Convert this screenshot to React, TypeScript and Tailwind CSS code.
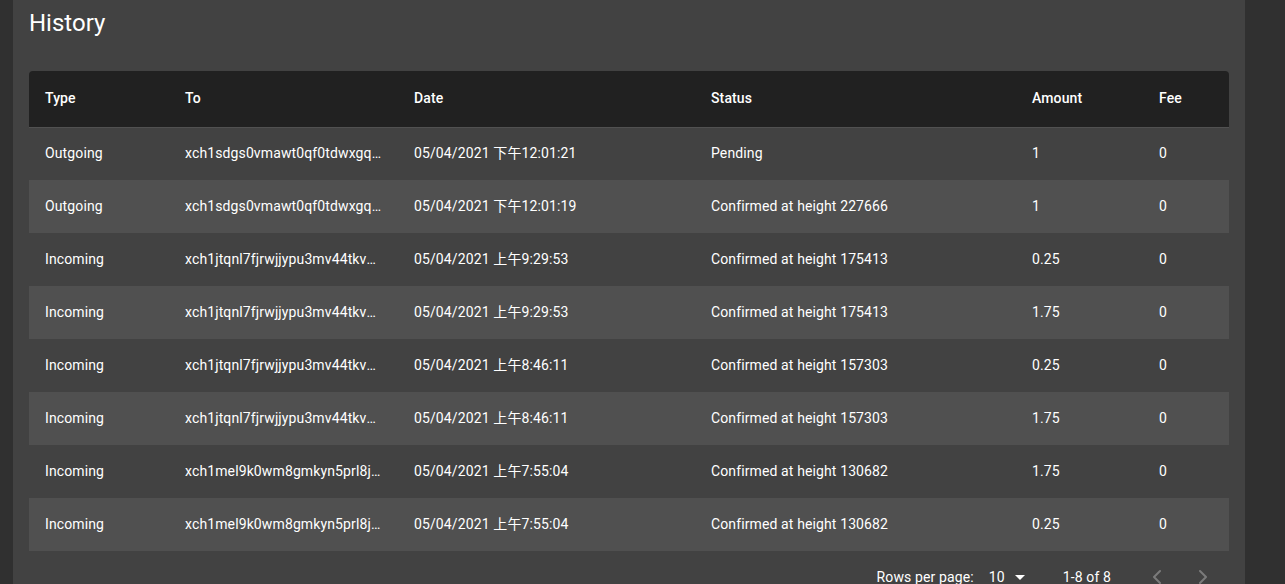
import { ChevronLeft, ChevronRight } from 'lucide-react';

const rows = [
  { type: 'Outgoing', to: 'xch1sdgs0vmawt0qf0tdwxgqxyz3kq8v2r', date: '05/04/2021 下午12:01:21', status: 'Pending', amount: '1', fee: '0' },
  { type: 'Outgoing', to: 'xch1sdgs0vmawt0qf0tdwxgqxyz3kq8v2r', date: '05/04/2021 下午12:01:19', status: 'Confirmed at height 227666', amount: '1', fee: '0' },
  { type: 'Incoming', to: 'xch1jtqnl7fjrwjjypu3mv44tkvmw9d0s8', date: '05/04/2021 上午9:29:53', status: 'Confirmed at height 175413', amount: '0.25', fee: '0' },
  { type: 'Incoming', to: 'xch1jtqnl7fjrwjjypu3mv44tkvmw9d0s8', date: '05/04/2021 上午9:29:53', status: 'Confirmed at height 175413', amount: '1.75', fee: '0' },
  { type: 'Incoming', to: 'xch1jtqnl7fjrwjjypu3mv44tkvmw9d0s8', date: '05/04/2021 上午8:46:11', status: 'Confirmed at height 157303', amount: '0.25', fee: '0' },
  { type: 'Incoming', to: 'xch1jtqnl7fjrwjjypu3mv44tkvmw9d0s8', date: '05/04/2021 上午8:46:11', status: 'Confirmed at height 157303', amount: '1.75', fee: '0' },
  { type: 'Incoming', to: 'xch1mel9k0wm8gmkyn5prl8jq3h7ws2c0e', date: '05/04/2021 上午7:55:04', status: 'Confirmed at height 130682', amount: '1.75', fee: '0' },
  { type: 'Incoming', to: 'xch1mel9k0wm8gmkyn5prl8jq3h7ws2c0e', date: '05/04/2021 上午7:55:04', status: 'Confirmed at height 130682', amount: '0.25', fee: '0' },
];

export default function App() {
  return (
    <div
      className="h-[584px] overflow-hidden bg-[#303030] pl-[13px] pr-[40px] text-white"
      style={{ fontFamily: 'Roboto, "Noto Sans CJK SC", sans-serif' }}
    >
      <div className="h-full bg-[#424242] px-4 pt-[7px]">
        {/* Title */}
        <h2 className="text-2xl leading-8 font-normal">History</h2>

        {/* Table */}
        <div className="mt-[32px] w-[1200px] tracking-[0.12px]">
          <table className="w-full table-fixed border-collapse text-sm">
            <colgroup>
              <col className="w-[140px]" />
              <col className="w-[229px]" />
              <col className="w-[297px]" />
              <col className="w-[321px]" />
              <col className="w-[127px]" />
              <col className="w-[86px]" />
            </colgroup>
            <thead>
              <tr className="h-[56px] bg-[#212121]">
                <th className="rounded-tl-[4px] border-b border-[#515151] px-4 pb-[2px] text-left font-medium">Type</th>
                <th className="border-b border-[#515151] px-4 pb-[2px] text-left font-medium">To</th>
                <th className="border-b border-[#515151] px-4 pb-[2px] text-left font-medium">Date</th>
                <th className="border-b border-[#515151] px-4 pb-[2px] text-left font-medium">Status</th>
                <th className="border-b border-[#515151] px-4 pb-[2px] text-left font-medium">Amount</th>
                <th className="rounded-tr-[4px] border-b border-[#515151] px-4 pb-[2px] text-left font-medium">Fee</th>
              </tr>
            </thead>
            <tbody>
              {rows.map((row, index) => (
                <tr key={index} className={`h-[53px] ${index % 2 === 0 ? 'bg-[#424242]' : 'bg-[#505050]'}`}>
                  <td className="px-4 pb-[2px]">{row.type}</td>
                  <td className="truncate pb-[2px] pl-4 pr-[14px]">{row.to}</td>
                  <td className="px-4 pb-[2px]">{row.date}</td>
                  <td className="px-4 pb-[2px]">{row.status}</td>
                  <td className="px-4 pb-[2px]">{row.amount}</td>
                  <td className="px-4 pb-[2px]">{row.fee}</td>
                </tr>
              ))}
            </tbody>
          </table>

          {/* Pagination */}
          <div className="flex h-[52px] items-center justify-end text-sm">
            <span>Rows per page:</span>
            <div className="ml-[15px] flex items-center">
              <span>10</span>
              <svg className="ml-[3px] h-6 w-6" viewBox="0 0 24 24" fill="currentColor">
                <path d="M7 10l5 5 5-5z" />
              </svg>
            </div>
            <span className="ml-[31px]">1-8 of 8</span>
            <div className="ml-[34px] flex items-center gap-[22px] pr-[14px] text-white/30">
              <ChevronLeft className="h-6 w-6" strokeWidth={2} />
              <ChevronRight className="h-6 w-6" strokeWidth={2} />
            </div>
          </div>
        </div>
      </div>
    </div>
  );
}
